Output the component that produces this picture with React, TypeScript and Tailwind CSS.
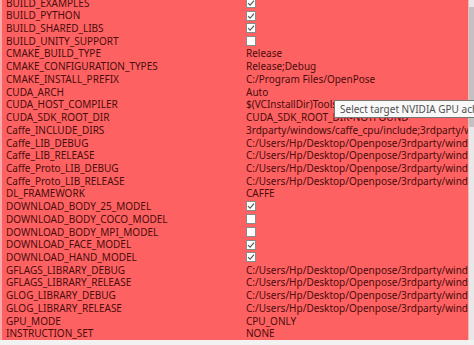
import React from 'react';

type Row = { name: string; check?: boolean; value?: string };

const OP = 'C:/Users/Hp/Desktop/Openpose/3rdparty/windows/';

const rows: Row[] = [
  { name: 'BUILD_EXAMPLES', check: true },
  { name: 'BUILD_PYTHON', check: true },
  { name: 'BUILD_SHARED_LIBS', check: true },
  { name: 'BUILD_UNITY_SUPPORT', check: false },
  { name: 'CMAKE_BUILD_TYPE', value: 'Release' },
  { name: 'CMAKE_CONFIGURATION_TYPES', value: 'Release;Debug' },
  { name: 'CMAKE_INSTALL_PREFIX', value: 'C:/Program Files/OpenPose' },
  { name: 'CUDA_ARCH', value: 'Auto' },
  { name: 'CUDA_HOST_COMPILER', value: '$(VCInstallDir)Tools/MSVC/$(VCToolsVersion)/bin/Host$(Platform)/$(PlatformTarget)' },
  { name: 'CUDA_SDK_ROOT_DIR', value: 'CUDA_SDK_ROOT_DIR-NOTFOUND' },
  { name: 'Caffe_INCLUDE_DIRS', value: '3rdparty/windows/caffe_cpu/include;3rdparty/windows/caffe3rdparty/include' },
  { name: 'Caffe_LIB_DEBUG', value: OP + 'caffe_cpu/lib/caffe-d.lib' },
  { name: 'Caffe_LIB_RELEASE', value: OP + 'caffe_cpu/lib/caffe.lib' },
  { name: 'Caffe_Proto_LIB_DEBUG', value: OP + 'caffe3rdparty/lib/libprotobufd.lib' },
  { name: 'Caffe_Proto_LIB_RELEASE', value: OP + 'caffe3rdparty/lib/libprotobuf.lib' },
  { name: 'DL_FRAMEWORK', value: 'CAFFE' },
  { name: 'DOWNLOAD_BODY_25_MODEL', check: true },
  { name: 'DOWNLOAD_BODY_COCO_MODEL', check: false },
  { name: 'DOWNLOAD_BODY_MPI_MODEL', check: false },
  { name: 'DOWNLOAD_FACE_MODEL', check: true },
  { name: 'DOWNLOAD_HAND_MODEL', check: true },
  { name: 'GFLAGS_LIBRARY_DEBUG', value: OP + 'caffe3rdparty/lib/gflagsd.lib' },
  { name: 'GFLAGS_LIBRARY_RELEASE', value: OP + 'caffe3rdparty/lib/gflags.lib' },
  { name: 'GLOG_LIBRARY_DEBUG', value: OP + 'caffe3rdparty/lib/glogd.lib' },
  { name: 'GLOG_LIBRARY_RELEASE', value: OP + 'caffe3rdparty/lib/glog.lib' },
  { name: 'GPU_MODE', value: 'CPU_ONLY' },
  { name: 'INSTRUCTION_SET', value: 'NONE' },
];

function CheckBox({ on }: { on: boolean }) {
  return (
    <span className="flex h-[10px] w-[10px] items-center justify-center border border-[#8a8a8a] bg-white">
      {on && (
        <svg width="8" height="8" viewBox="0 0 8 8">
          <path d="M1 4.2 L3.1 6.2 L7 1.6" fill="none" stroke="#555" strokeWidth="1.1" />
        </svg>
      )}
    </span>
  );
}

export default function App() {
  return (
    <div
      className="relative h-[345px] w-[474px] overflow-hidden bg-[#f2f2f2] text-[10px] text-[#4a0c0c]"
      style={{ fontFamily: '"Noto Sans", "Open Sans", sans-serif' }}
    >
      <div className="flex h-[340px]">
        <div className="w-[2px] bg-[#f7a8a8]" />
        <div className="w-[466px] overflow-hidden bg-[#fe6161]">
          <div className="-mt-[3.4px]">
            {rows.map((r) => (
              <div key={r.name} className="flex h-[12.73px] items-center leading-[12.73px]">
                <span className="w-[244px] shrink-0 overflow-hidden whitespace-nowrap pl-[4px]">{r.name}</span>
                <span className="flex min-w-0 flex-1 items-center overflow-hidden whitespace-nowrap">
                  {r.check !== undefined ? <CheckBox on={r.check} /> : r.value}
                </span>
              </div>
            ))}
          </div>
        </div>
        <div className="w-[1px] bg-[#f4b8b8]" />
        <div className="flex w-[5px] flex-col bg-[#e8e8e8] pt-[7px]">
          <div className="h-[120px] bg-[#c2c2c2]" />
        </div>
      </div>

      {/* tooltip */}
      <div className="absolute left-[334px] top-[100px] flex h-[18px] w-[160px] items-center whitespace-nowrap border border-[#767676] bg-[#f8f8f8] pl-[5px] text-[10px] text-[#505050]">
        Select target NVIDIA GPU achitecture.
      </div>
    </div>
  );
}
